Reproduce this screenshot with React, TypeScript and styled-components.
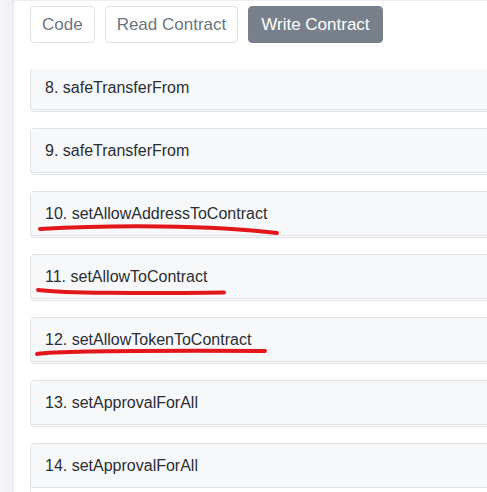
import * as React from "react";
import styled, { createGlobalStyle } from "styled-components";

// ページ全体の基本スタイル
const GlobalStyle = createGlobalStyle`
  html, body {
    margin: 0;
    padding: 0;
    background: #ffffff;
    overflow: hidden;
  }
  body {
    font-family: "Liberation Sans", Arial, sans-serif;
    color: #212529;
  }
`;

const Page = styled.div`
  display: flex;
  height: 492px;
  overflow: hidden;
`;

// 左側の細いサイドバー
const Sidebar = styled.div`
  flex: 0 0 13px;
  background: linear-gradient(to right, #f6f7f9, #eef0f3);
  border-right: 1px solid #e6e8eb;
`;

const Main = styled.div`
  flex: 1;
  min-width: 0;
  border-top: 1px solid #eceef1;
  padding: 5px 0 0 16px;
`;

const Tabs = styled.div`
  display: flex;
  gap: 10px;
`;

const Tab = styled.button<{ $active?: boolean }>`
  height: 37px;
  padding: 0 ${(p) => (p.$active ? "12px" : "11px")};
  font-family: "Liberation Sans", Arial, sans-serif;
  font-size: 17px;
  line-height: 35px;
  border-radius: 4px;
  border: 1px solid ${(p) => (p.$active ? "#78818b" : "#dee2e6")};
  background: ${(p) => (p.$active ? "#78818b" : "#ffffff")};
  color: ${(p) => (p.$active ? "#ffffff" : "#6c757d")};
  cursor: pointer;
`;

// スクロール領域（先頭のカードが少し隠れている）
const ScrollArea = styled.div`
  margin-top: 26px;
  height: 430px;
  overflow: hidden;
  margin-right: -12px;
`;

const List = styled.div`
  display: flex;
  flex-direction: column;
  gap: 16px;
  margin-top: -4px;
`;

const Card = styled.div`
  border: 1px solid #dfe2e6;
  border-radius: 4px;
  background: #ffffff;
`;

const CardHeader = styled.div`
  position: relative;
  background: #f7f8fa;
  border-bottom: 1px solid #dfe2e6;
  padding: 10px 14px 9px;
  font-size: 16px;
  line-height: 24px;
  color: #2a2e33;
`;

const CardBody = styled.div<{ $open?: boolean }>`
  height: ${(p) => (p.$open ? "120px" : "1px")};
`;

// 手書きの赤い下線
const Mark = styled.svg`
  position: absolute;
  left: 0;
  top: 0;
  width: 100%;
  height: 100%;
  overflow: visible;
  pointer-events: none;
`;

const marks: Record<number, string> = {
  10: "M9 37 C 80 33, 180 33, 246 41",
  11: "M7 35 C 40 39, 120 38, 193 37.5",
  12: "M6 36 C 30 32.5, 120 32.5, 234 33",
};

const items = [
  { n: 8, name: "safeTransferFrom" },
  { n: 9, name: "safeTransferFrom" },
  { n: 10, name: "setAllowAddressToContract" },
  { n: 11, name: "setAllowToContract" },
  { n: 12, name: "setAllowTokenToContract" },
  { n: 13, name: "setApprovalForAll" },
  { n: 14, name: "setApprovalForAll", open: true },
];

export default function App() {
  return (
    <>
      <GlobalStyle />
      <Page>
        <Sidebar />
        <Main>
          <Tabs>
            <Tab>Code</Tab>
            <Tab>Read Contract</Tab>
            <Tab $active>Write Contract</Tab>
          </Tabs>
          <ScrollArea>
            <List>
              {items.map((item) => (
                <Card key={item.n}>
                  <CardHeader>
                    {item.n}. {item.name}
                    {marks[item.n] && (
                      <Mark>
                        <path
                          d={marks[item.n]}
                          fill="none"
                          stroke="#e3161c"
                          strokeWidth={4}
                          strokeLinecap="round"
                        />
                      </Mark>
                    )}
                  </CardHeader>
                  <CardBody $open={item.open} />
                </Card>
              ))}
            </List>
          </ScrollArea>
        </Main>
      </Page>
    </>
  );
}
